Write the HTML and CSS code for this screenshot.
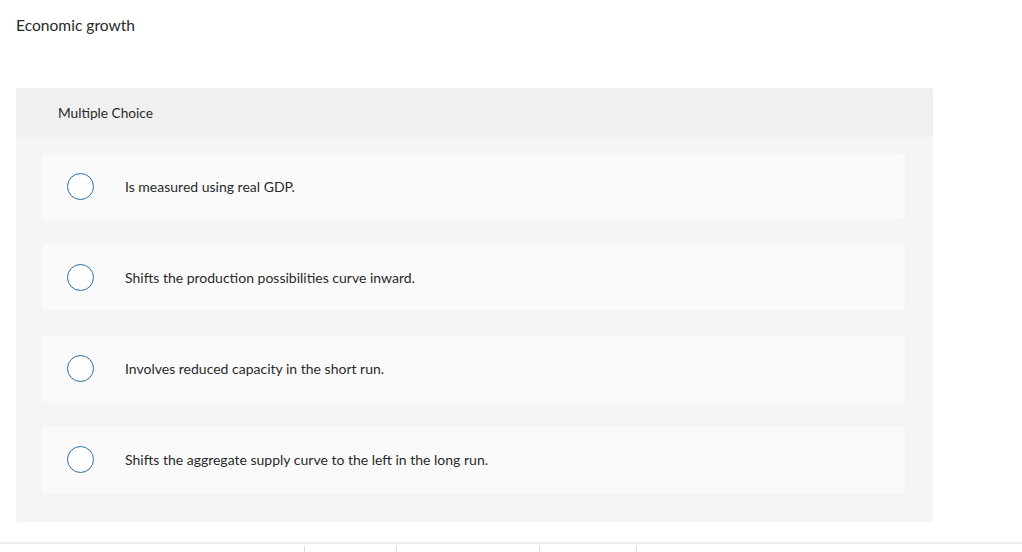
FILE: index.html
```html
<!DOCTYPE html>
<html>
<head>
<meta charset="utf-8">
<link rel="stylesheet" href="styles.css">
</head>
<body>
<div class="page">
  <h1 class="title">Economic growth</h1>
  <div class="question">
    <div class="q-header">Multiple Choice</div>
    <div class="q-body">
      <div class="option"><span class="radio"></span><span class="label">Is measured using real GDP.</span></div>
      <div class="option"><span class="radio"></span><span class="label">Shifts the production possibilities curve inward.</span></div>
      <div class="option"><span class="radio"></span><span class="label">Involves reduced capacity in the short run.</span></div>
      <div class="option"><span class="radio"></span><span class="label">Shifts the aggregate supply curve to the left in the long run.</span></div>
    </div>
  </div>
  <div class="footer">
    <span class="tick t1"></span><span class="tick t2"></span><span class="tick t3"></span><span class="tick t4"></span>
  </div>
</div>
</body>
</html>
```
FILE: styles.css
```css
html, body { margin: 0; padding: 0; background: #fff; }
body { font-family: Lato, "Open Sans", sans-serif; color: #333; width: 1022px; height: 552px; overflow: hidden; }
.page { padding: 15px 0 0 0; }
.title { margin: 0 0 0 16px; font-size: 15.6px; font-weight: 400; line-height: 20px; color: #2a2a2a; }
.question { margin: 53px 0 0 16px; width: 917px; border-radius: 3px; overflow: hidden; background: #f5f5f5; }
.q-header { background: #f0f0f0; height: 49px; display: flex; align-items: center; padding-left: 42px; font-size: 13.7px; color: #2a2a2a; }
.q-body { padding: 16px 28px 29px 26px; display: flex; flex-direction: column; gap: 25.3px; }
.option { height: 66px; background: #fafafa; border-radius: 3px; display: flex; align-items: center; }
.radio { width: 25px; height: 25px; border: 1.5px solid #2c6aa0; border-radius: 50%; margin-left: 25px; background: #fff; flex: none; }
.label { margin-left: 31px; font-size: 14px; color: #2a2a2a; }
.footer { margin-top: 20px; border-top: 2px solid #eee; height: 10px; position: relative; }
.tick { position: absolute; top: 2px; width: 1px; height: 8px; background: #ddd; }
.t1 { left: 304px; } .t2 { left: 396px; } .t3 { left: 539px; } .t4 { left: 636px; }
```
